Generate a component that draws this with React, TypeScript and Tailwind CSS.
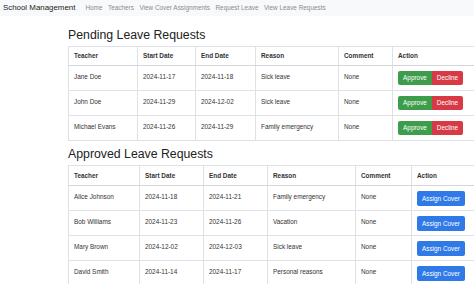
import React from 'react';

type Row = {
  teacher: string;
  start: string;
  end: string;
  reason: string;
  comment: string;
};

const pending: Row[] = [
  { teacher: 'Jane Doe', start: '2024-11-17', end: '2024-11-18', reason: 'Sick leave', comment: 'None' },
  { teacher: 'John Doe', start: '2024-11-29', end: '2024-12-02', reason: 'Sick leave', comment: 'None' },
  { teacher: 'Michael Evans', start: '2024-11-26', end: '2024-11-29', reason: 'Family emergency', comment: 'None' },
];

const approved: Row[] = [
  { teacher: 'Alice Johnson', start: '2024-11-18', end: '2024-11-21', reason: 'Family emergency', comment: 'None' },
  { teacher: 'Bob Williams', start: '2024-11-23', end: '2024-11-26', reason: 'Vacation', comment: 'None' },
  { teacher: 'Mary Brown', start: '2024-12-02', end: '2024-12-03', reason: 'Sick leave', comment: 'None' },
  { teacher: 'David Smith', start: '2024-11-14', end: '2024-11-17', reason: 'Personal reasons', comment: 'None' },
];

const headers = ['Teacher', 'Start Date', 'End Date', 'Reason', 'Comment', 'Action'];

const th = 'border border-[#dee2e6] border-b-[#d3d7db] px-[5px] text-left font-bold align-middle';
const td = 'border border-[#dee2e6] px-[5px] pt-[5px] align-top leading-[11px]';

const PendingActions: React.FC = () => (
  <div className="flex">
    <button className="flex h-[14px] w-[34px] items-center justify-center rounded-l-[2px] bg-[#3d9d4a] text-[6.4px] text-white">
      Approve
    </button>
    <button className="flex h-[14px] w-[31px] items-center justify-center rounded-r-[2px] bg-[#d73a45] text-[6.4px] text-white">
      Decline
    </button>
  </div>
);

const AssignAction: React.FC = () => (
  <button className="flex h-[15px] w-[48px] items-center justify-center rounded-[2px] bg-[#2f7ae6] text-[6.4px] text-white">
    Assign Cover
  </button>
);

interface LeaveTableProps {
  rows: Row[];
  widths: string[];
  headHeight: string;
  action: React.ReactNode;
}

const LeaveTable: React.FC<LeaveTableProps> = ({ rows, widths, headHeight, action }) => (
  <table className="w-[430px] table-fixed border-collapse text-[6.4px] text-[#333]">
    <colgroup>
      {widths.map((w, i) => (
        <col key={i} className={w} />
      ))}
    </colgroup>
    <thead>
      <tr className={headHeight}>
        {headers.map((h) => (
          <th key={h} className={th}>
            {h}
          </th>
        ))}
      </tr>
    </thead>
    <tbody>
      {rows.map((r) => (
        <tr key={r.teacher} className="h-[25px]">
          <td className={td}>{r.teacher}</td>
          <td className={td}>{r.start}</td>
          <td className={td}>{r.end}</td>
          <td className={td}>{r.reason}</td>
          <td className={td}>{r.comment}</td>
          <td className="border border-[#dee2e6] px-[5px] pt-[5px] align-top">{action}</td>
        </tr>
      ))}
    </tbody>
  </table>
);

export default function App() {
  return (
    <div className="h-[284px] w-[474px] overflow-hidden bg-white font-['Liberation_Sans',Arial,sans-serif]">
      {/* Navbar */}
      <nav className="flex h-[16px] items-center bg-[#f8f9fa] pl-[3px]">
        <span className="text-[7.9px] text-[#222]">School Management</span>
        <div className="ml-[10px] flex gap-[5.5px] text-[6.4px] text-[#8c8c8c]">
          <span>Home</span>
          <span>Teachers</span>
          <span>View Cover Assignments</span>
          <span>Request Leave</span>
          <span>View Leave Requests</span>
        </div>
      </nav>

      <main className="pl-[68px]">
        <h2 className="mt-[12px] h-[15px] text-[12.3px] leading-[15px] text-[#222]">Pending Leave Requests</h2>
        <div className="mt-[3px]">
          <LeaveTable
            rows={pending}
            widths={['w-[69px]', 'w-[58px]', 'w-[60px]', 'w-[83px]', 'w-[54px]', 'w-[106px]']}
            headHeight="h-[19px]"
            action={<PendingActions />}
          />
        </div>

        <h2 className="mt-[6px] h-[15px] text-[12.3px] leading-[15px] text-[#222]">Approved Leave Requests</h2>
        <div className="mt-[3px]">
          <LeaveTable
            rows={approved}
            widths={['w-[71px]', 'w-[64px]', 'w-[64px]', 'w-[88px]', 'w-[56px]', 'w-[87px]']}
            headHeight="h-[20px]"
            action={<AssignAction />}
          />
        </div>
      </main>
    </div>
  );
}
